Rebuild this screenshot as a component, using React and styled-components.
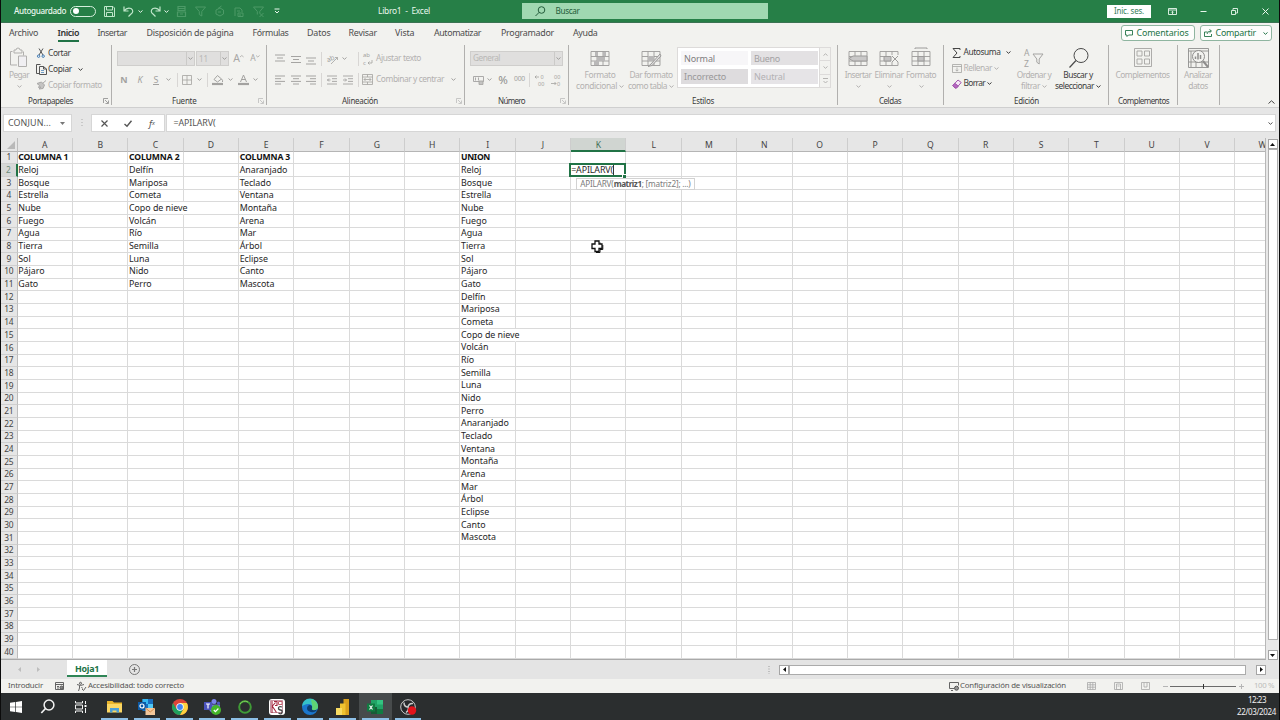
import React, { useLayoutEffect, useRef } from "react";
import styled, { createGlobalStyle, css } from "styled-components";

const Global = createGlobalStyle`
  * { box-sizing: border-box; }
  body { margin: 0; overflow: hidden; background: #000; }
`;

const ink = "#3c3c3c";
const dim = "#b3b1b0";
const green = "#217346";

/* ---------- text ---------- */
const TextSpan = styled.span`
  display: inline-block;
  flex: none;
  white-space: pre;
  font-size: ${(p) => p.$s || 8.4}px;
  font-weight: ${(p) => p.$b || 400};
  font-style: ${(p) => (p.$i ? "italic" : "normal")};
  color: ${(p) => p.$c || "inherit"};
  margin-left: ${(p) => p.$ml || 0}px;
`;

/* Label whose tracking is computed so that it fills the width w. */
function T({ w, s, b, c, i, ml, children }) {
  const ref = useRef(null);
  useLayoutEffect(() => {
    const el = ref.current;
    if (!w || !el) return;
    el.style.letterSpacing = "0px";
    const natural = el.getBoundingClientRect().width;
    el.style.letterSpacing = (w - natural) / el.textContent.length + "px";
  }, [w, s, b, children]);
  return (
    <TextSpan ref={ref} $s={s} $b={b} $c={c} $i={i} $ml={ml}>
      {children}
    </TextSpan>
  );
}

/* ---------- generic pieces ---------- */
const Svg = styled.svg`
  display: block;
  flex: none;
  fill: none;
  stroke: currentColor;
  stroke-width: 1;
  overflow: visible;
`;
const Ico = ({ w = 12, h = w, c, children }) => (
  <Svg width={w} height={h} viewBox={`0 0 ${w} ${h}`} color={c}>
    {children}
  </Svg>
);
const Slot = styled.div`
  flex: none;
  width: ${(p) => p.$w}px;
  margin-left: ${(p) => p.$ml || 0}px;
  display: flex;
  align-items: center;
  justify-content: center;
  color: ${(p) => p.$c || "inherit"};
`;
const Chevron = ({ c }) => (
  <Ico w={5} h={3} c={c}>
    <path d="M.5 .5 2.5 2.3 4.5 .5" />
  </Ico>
);
const Rule = styled.div`
  flex: none;
  width: 1px;
  height: 14px;
  margin-left: ${(p) => p.$ml || 0}px;
  background: #d8d6d4;
`;

const Window = styled.div`
  width: 1280px;
  height: 720px;
  display: flex;
  flex-direction: column;
  border-left: 1px solid #0b0b0b;
  border-right: 1px solid #0b0b0b;
  background: #e6e6e6;
  color: ${ink};
  font-family: "Noto Sans", "Open Sans", sans-serif;
  line-height: 1;
  overflow: hidden;
  position: relative;
`;

/* ---------- title bar ---------- */
const TitleBar = styled.header`
  height: 23px;
  flex: none;
  display: flex;
  align-items: center;
  padding-left: 13px;
  background: #267f47;
  border-bottom: 1px solid #3b7353;
  color: #e9f7ed;
`;
const Toggle = styled.div`
  width: 26px;
  height: 11px;
  margin-left: 4px;
  flex: none;
  border: 1px solid #d5efdc;
  border-radius: 6px;
  display: flex;
  align-items: center;
  padding-left: 2px;
  &::before { content: ""; width: 6px; height: 6px; border-radius: 50%; background: #fff; }
`;
const SearchBox = styled.div`
  width: 246px;
  height: 16px;
  flex: none;
  margin-left: 92px;
  display: flex;
  align-items: center;
  padding-left: 13px;
  background: #a0d8b1;
  color: #245c3b;
`;
const SignIn = styled.div`
  width: 44px;
  height: 13px;
  margin-left: 339px;
  flex: none;
  display: flex;
  align-items: center;
  justify-content: center;
  background: #fff;
  color: #38805a;
`;

/* ---------- tabs ---------- */
const TabBar = styled.nav`
  height: 20px;
  flex: none;
  display: flex;
  align-items: center;
  background: #f2f2ef;
`;
const Tab = styled.div`
  margin-left: ${(p) => p.$ml}px;
  height: 17px;
  display: flex;
  align-items: center;
  padding-top: 2px;
  border-bottom: 2px solid ${(p) => (p.$on ? green : "transparent")};
`;
const Outlined = styled.div`
  height: 16px;
  width: ${(p) => p.$w}px;
  margin-left: ${(p) => p.$ml}px;
  flex: none;
  display: flex;
  align-items: center;
  border: 1px solid #8fb5a0;
  border-radius: 3px;
  background: #fdfdfc;
  color: ${green};
`;
const tabs = [
  ["Archivo", 8, 29], ["Inicio", 19.5, 21.5], ["Insertar", 18.5, 29.5],
  ["Disposición de página", 19.5, 87], ["Fórmulas", 19, 36], ["Datos", 18.5, 23.5],
  ["Revisar", 18, 28.5], ["Vista", 18, 19.5], ["Automatizar", 19.5, 47],
  ["Programador", 20, 53], ["Ayuda", 19, 24.5],
];

/* ---------- ribbon ---------- */
const RibbonBar = styled.section`
  height: 64px;
  flex: none;
  display: flex;
  padding-top: 2px;
  background: #f2f2ef;
`;
const GroupBox = styled.div`
  width: ${(p) => p.$w}px;
  height: 60px;
  flex: none;
  display: flex;
  flex-direction: column;
  border-right: 1px solid #b1b0ae;
`;
const GroupBody = styled.div`
  height: 52px;
  display: flex;
`;
const GroupFoot = styled.div`
  height: 9px;
  display: flex;
  align-items: center;
  padding-left: ${(p) => p.$pl}px;
  padding-right: 2px;
  justify-content: space-between;
`;
const Launcher = ({ c = "#8a8a8a" }) => (
  <Ico w={6} c={c}>
    <path d="M.5 5V.5H5M2 2l3 3M5.500 2.500v3h-3" strokeWidth=".8" />
  </Ico>
);
function Group({ w, pl, name, nw, launch, launchColor, children }) {
  return (
    <GroupBox $w={w}>
      <GroupBody>{children}</GroupBody>
      <GroupFoot $pl={pl}>
        {name ? <T s={8} w={nw}>{name}</T> : null}
        {launch ? <Launcher c={launchColor} /> : null}
      </GroupFoot>
    </GroupBox>
  );
}
const Column = styled.div`
  flex: none;
  display: flex;
  flex-direction: column;
  padding-top: ${(p) => p.$pt || 0}px;
  margin-left: ${(p) => p.$ml || 0}px;
`;
const Row = styled.div`
  height: ${(p) => p.$h}px;
  display: flex;
  align-items: center;
  color: ${(p) => p.$c || "inherit"};
`;
const BigButton = styled.div`
  flex: none;
  width: ${(p) => p.$w}px;
  margin-left: ${(p) => p.$ml || 0}px;
  display: flex;
  flex-direction: column;
  align-items: center;
  color: ${(p) => p.$c || dim};
`;
const BigIcon = styled.div`
  height: 25px;
  display: flex;
  align-items: center;
`;
const Line = styled.div`
  height: 11px;
  display: flex;
  align-items: center;
  gap: 2px;
`;
const Combo = styled.div`
  width: ${(p) => p.$w}px;
  height: 15px;
  margin-left: ${(p) => p.$ml || 0}px;
  flex: none;
  display: flex;
  align-items: center;
  justify-content: space-between;
  padding-left: 2px;
  background: #e0dfde;
  border: 1px solid #cfcecc;
  color: #b9b8b6;
`;
const ComboArrow = styled.div`
  width: 8px;
  height: 13px;
  margin-left: auto;
  border-left: 1px solid #cbcac8;
  display: flex;
  align-items: center;
  justify-content: center;
  color: #9f9e9c;
`;
const Gallery = styled.div`
  width: 143px;
  height: 41px;
  margin-left: 1px;
  margin-top: 2px;
  flex: none;
  display: grid;
  grid-template-columns: 67px 67px;
  grid-template-rows: 14px 15px;
  gap: 4px 3px;
  padding: 3px 3px;
  background: #fff;
  border: 1px solid #dddbda;
`;
const StyleCell = styled.div`
  display: flex;
  align-items: center;
  padding-left: 3px;
  background: ${(p) => p.$bg};
  color: ${(p) => p.$c};
`;
const GalleryScroll = styled.div`
  width: 11px;
  height: 41px;
  margin-top: 2px;
  flex: none;
  display: flex;
  flex-direction: column;
  border: 1px solid #dddbda;
  border-left: 0;
`;
const ScrollStep = styled.div`
  flex: 1;
  display: flex;
  align-items: center;
  justify-content: center;
  color: #b5b4b2;
  & + & { border-top: 1px solid #dddbda; }
`;

const Lines = ({ rows, c = "#a5a4a2" }) => (
  <Ico w={10} h={10} c={c}>
    {rows.map(([x, y, w], i) => <path key={i} d={`M${x} ${y}h${w}`} />)}
  </Ico>
);
const TableIcon = ({ variant }) => (
  <Ico w={20} h={18} c="#9c9b9a">
    <path d="M1 2.500h18v14H1zM1 7.500h18M1 12h18M7 2.500v14M13 2.500v14" strokeWidth=".9" />
    {variant === "cond" && <path d="M5 3h3v4H5zM7 8h8v4H7zM4 12h5v4H4zM13 3h3v4h-3z" fill="#b9b8b8" stroke="none" />}
    {variant === "fmt" && (
      <>
        <path d="M7 7h6v5H7z" fill="#b9b8b8" stroke="none" />
        <path d="M19 5 10 15l-3 2.500 4-1L20 7z" fill="#dedddd" />
      </>
    )}
    {variant === "ins" && <path d="M5 7h14v5H5l-4-2.500z" fill="#c9c8c8" />}
    {variant === "del" && (
      <>
        <path d="M12 6h9v7h-9z" fill="#f2f2ef" stroke="none" />
        <path d="M5 7.500h7v4.500H5z" fill="#c4c3c3" />
        <path d="m13 7 6 6M19 7l-6 6" />
      </>
    )}
    {variant === "cell" && (
      <>
        <path d="M7 7.500h6V12H7z" fill="#c4c3c3" />
        <path d="M4 0v-1M4-1h12M16 0v-1" />
      </>
    )}
  </Ico>
);

function Ribbon() {
  return (
    <RibbonBar>
      <Group w={111} pl={27} name="Portapapeles" nw={45} launch>
        <BigButton $w={22} $ml={7}>
          <BigIcon>
            <Ico w={20} h={20} c="#b0afad">
              <path d="M3.500 3.500h-2v13.500H8M5 2h2a2 2 0 0 1 4 0h2v3H5zM14.500 3.500v4" fill="none" />
              <path d="M9.500 8h8v10.500h-8z" fill="#f0eff2" />
            </Ico>
          </BigIcon>
          <Line><T w={20}>Pegar</T></Line>
          <Line><Chevron /></Line>
        </BigButton>
        <Column $ml={5} >
          <Row $h={16}>
            <Slot $w={12}>
              <Ico w={8} h={10} c="#555">
                <path d="M2 .5 6 7M6 .5 2 7" />
                <circle cx="1.600" cy="8.200" r="1.200" stroke="#3a78b5" />
                <circle cx="6.200" cy="8.200" r="1.200" stroke="#3a78b5" />
              </Ico>
            </Slot>
            <T w={22.5} ml={1}>Cortar</T>
          </Row>
          <Row $h={16}>
            <Slot $w={12}>
              <Ico w={11} h={11} c="#555">
                <path d="M3 9.500H.5v-9h4M3.500 2.500h4L10.500 5v5.500h-7zM7.500 2.500V5h3" />
                <path d="M5 6.500h3M5 8.500h3" stroke="#3a78b5" strokeWidth=".7" />
              </Ico>
            </Slot>
            <T w={24} ml={1}>Copiar</T>
            <Slot $w={8} $ml={4}><Chevron /></Slot>
          </Row>
          <Row $h={16} $c={dim}>
            <Slot $w={12}>
              <Ico w={11} h={10} c="#a9a8a7">
                <path d="M1 3.500 5.500 2l3 3-1.500 3.500L3 9l2-2-2.500.5 1-2zM6.500 3.500 10 .5" fill="#c4c3c2" />
              </Ico>
            </Slot>
            <T w={54} ml={1}>Copiar formato</T>
          </Row>
        </Column>
      </Group>

      <Group w={155} pl={60} name="Fuente" nw={24.5} launch launchColor="#bbb">
        <Column $pt={5}>
          <Row $h={17} $c="#a9a8a6">
            <Combo $w={78} $ml={5}><ComboArrow><Chevron /></ComboArrow></Combo>
            <Combo $w={33} $ml={1}><T s={8}>11</T><ComboArrow><Chevron /></ComboArrow></Combo>
            <Slot $w={17} $ml={1}><T s={10.500}>A</T><Ico w={4} h={8}><path d="M0 2 1.800.5 3.600 2" strokeWidth=".8" /></Ico></Slot>
            <Slot $w={16}><T s={8.500}>A</T><Ico w={4} h={8}><path d="M0 .5 1.800 2 3.600.5" strokeWidth=".8" /></Ico></Slot>
          </Row>
          <Row $h={25} $c="#a3a2a0">
            <Slot $w={16} $ml={4}><T b={700} s={9}>N</T></Slot>
            <Slot $w={16}><T i s={9}>K</T></Slot>
            <Slot $w={16}><Ico w={8} h={11}><path d="M1 10.500h6" /><text x="1.500" y="8.500" fontSize="9" fill="currentColor" stroke="none">S</text></Ico></Slot>
            <Slot $w={8}><Chevron /></Slot>
            <Rule $ml={5} />
            <Slot $w={18}><Ico w={10}><path d="M.5.500h9v9h-9zM5 .5v9M.5 5h9" strokeWidth=".8" /></Ico></Slot>
            <Slot $w={6}><Chevron /></Slot>
            <Rule $ml={5} />
            <Slot $w={19}>
              <Ico w={12} h={11}>
                <path d="M2 5.500 5.500 1.500 9.500 5l-4 3zM9.500 5q1.500 1 1 3" />
                <path d="M0 10h11" strokeWidth="2.200" />
              </Ico>
            </Slot>
            <Slot $w={6}><Chevron /></Slot>
            <Slot $w={20}>
              <Ico w={11} h={11}>
                <path d="M2.500 8 5.500 1 8.500 8M3.500 5.500h4" />
                <path d="M0 10h11" strokeWidth="2.200" />
              </Ico>
            </Slot>
            <Slot $w={5}><Chevron /></Slot>
          </Row>
        </Column>
      </Group>

      <Group w={198} pl={75} name="Alineación" nw={36} launch launchColor="#bbb">
        <Column $pt={2}>
          <Row $h={23} $c="#a3a2a0">
            <Slot $w={16} $ml={5}><Lines rows={[[0, 1, 10], [2, 4, 6], [0, 7, 10]]} /></Slot>
            <Slot $w={15}><Lines rows={[[0, 2.500, 10], [2, 5.500, 6], [0, 8.500, 10]]} /></Slot>
            <Slot $w={16}><Lines rows={[[0, 4, 10], [2, 7, 6], [0, 10, 10]]} /></Slot>
            <Rule $ml={2} />
            <Slot $w={20}>
              <Ico w={11} h={10}><text x="0" y="7" fontSize="7" fill="currentColor" stroke="none" transform="rotate(-25 4 6)">ab</text><path d="M4 10 10.500 3.500M8 3.500h2.500V6" strokeWidth=".8" /></Ico>
            </Slot>
            <Slot $w={5}><Chevron /></Slot>
            <Rule $ml={11} />
            <Slot $w={17}>
              <Ico w={10} h={12}>
                <text x="0" y="4" fontSize="6" fill="currentColor" stroke="none">ab</text>
                <text x="0" y="12" fontSize="6" fill="currentColor" stroke="none">c</text>
                <path d="M9 7v3H5M6.500 8.500 5 10l1.500 1.500" strokeWidth=".8" />
              </Ico>
            </Slot>
            <T w={45} c={dim}>Ajustar texto</T>
          </Row>
          <Row $h={19} $c="#a3a2a0">
            <Slot $w={16} $ml={5}><Lines rows={[[0, 1, 10], [0, 3.700, 6], [0, 6.400, 10], [0, 9, 6]]} /></Slot>
            <Slot $w={15}><Lines rows={[[0, 1, 10], [2, 3.700, 6], [0, 6.400, 10], [2, 9, 6]]} /></Slot>
            <Slot $w={16}><Lines rows={[[0, 1, 10], [4, 3.700, 6], [0, 6.400, 10], [4, 9, 6]]} /></Slot>
            <Rule $ml={2} />
            <Slot $w={20}><Ico w={10}><path d="M0 1h10M5 3.700h5M5 6.400h5M0 9h10M0 5h3.500M2 3.500.5 5 2 6.500" strokeWidth=".9" /></Ico></Slot>
            <Slot $w={12}><Ico w={10}><path d="M0 1h10M5 3.700h5M5 6.400h5M0 9h10M0 5h3.500M2 3.500 3.500 5 2 6.500" strokeWidth=".9" /></Ico></Slot>
            <Rule $ml={4} />
            <Slot $w={17}><Ico w={11} h={11}><path d="M.5.500h10v10H.5zM.5 3h10M.5 8h10M5.500.500V3M5.500 8v2.500M2 5.500h7M3.500 4 2 5.500 3.500 7M7.500 4 9 5.500 7.500 7" strokeWidth=".8" /></Ico></Slot>
            <T w={68} c={dim}>Combinar y centrar</T>
            <Slot $w={6} $ml={6}><Chevron /></Slot>
          </Row>
        </Column>
      </Group>

      <Group w={104} pl={33} name="Número" nw={27} launch launchColor="#bbb">
        <Column $pt={5}>
          <Row $h={17}>
            <Combo $w={93} $ml={5}><T w={27} s={8.200}>General</T><ComboArrow><Chevron /></ComboArrow></Combo>
          </Row>
          <Row $h={25} $c="#a3a2a0">
            <Slot $w={16} $ml={5}><Ico w={11} h={10}><path d="M.5 1.500h10v5H.5zM5.500 2.500v3M2.500 2.500v3" strokeWidth=".9" /><path d="M6 6h4v3.500H6z" fill="#c4c3c2" strokeWidth=".8" /></Ico></Slot>
            <Slot $w={6}><Chevron /></Slot>
            <Slot $w={22}><T s={11.500} c="#8f8e8c">%</T></Slot>
            <Slot $w={11}><T s={6.800} w={11}>000</T></Slot>
            <Rule $ml={4} />
            <Slot $w={19}><Ico w={11} h={12}><path d="M1 3h4M2.500 1.500 1 3l1.500 1.500" strokeWidth=".8" /><text x="6.500" y="4.500" fontSize="5.500" fill="currentColor" stroke="none">0</text><text x="4" y="12" fontSize="5.500" fill="currentColor" stroke="none">00</text></Ico></Slot>
            <Slot $w={12}><Ico w={11} h={12}><text x="4" y="4.500" fontSize="5.500" fill="currentColor" stroke="none">00</text><text x="7" y="12" fontSize="5.500" fill="currentColor" stroke="none">0</text><path d="M1 9.500h5M4.500 8 6 9.500 4.500 11" strokeWidth=".8" /></Ico></Slot>
          </Row>
        </Column>
      </Group>

      <Group w={269} pl={123} name="Estilos" nw={22}>
        <BigButton $w={50} $ml={6}>
          <BigIcon><TableIcon variant="cond" /></BigIcon>
          <Line><T w={31}>Formato</T></Line>
          <Line><T w={41}>condicional</T><Chevron /></Line>
        </BigButton>
        <BigButton $w={50} $ml={1}>
          <BigIcon><TableIcon variant="fmt" /></BigIcon>
          <Line><T w={43}>Dar formato</T></Line>
          <Line><T w={39}>como tabla</T><Chevron /></Line>
        </BigButton>
        <Gallery>
          <StyleCell $bg="#f7f6f8" $c="#7e7d7e"><T s={9} w={31}>Normal</T></StyleCell>
          <StyleCell $bg="#e3e1e3" $c="#a3a2a4"><T s={9} w={26}>Bueno</T></StyleCell>
          <StyleCell $bg="#dedcde" $c="#999899"><T s={9} w={42}>Incorrecto</T></StyleCell>
          <StyleCell $bg="#e6e4e7" $c="#b3b1b4"><T s={9} w={31}>Neutral</T></StyleCell>
        </Gallery>
        <GalleryScroll>
          <ScrollStep><Ico w={5} h={3}><path d="M.5 2.500 2.500.8 4.500 2.500" /></Ico></ScrollStep>
          <ScrollStep><Chevron /></ScrollStep>
          <ScrollStep><Ico w={5} h={6}><path d="M0 .5h5M.5 3 2.500 5 4.500 3" /></Ico></ScrollStep>
        </GalleryScroll>
      </Group>

      <Group w={106} pl={41} name="Celdas" nw={22}>
        <BigButton $w={32} $ml={4}>
          <BigIcon><TableIcon variant="ins" /></BigIcon>
          <Line><T w={26.5}>Insertar</T></Line>
          <Line><Chevron /></Line>
        </BigButton>
        <BigButton $w={30}>
          <BigIcon><TableIcon variant="del" /></BigIcon>
          <Line><T w={29}>Eliminar</T></Line>
          <Line><Chevron /></Line>
        </BigButton>
        <BigButton $w={34}>
          <BigIcon><TableIcon variant="cell" /></BigIcon>
          <Line><T w={30}>Formato</T></Line>
          <Line><Chevron /></Line>
        </BigButton>
      </Group>

      <Group w={165} pl={70} name="Edición" nw={25}>
        <Column $ml={5.5}>
          <Row $h={15}>
            <Slot $w={14}><Ico w={9} h={10} c="#444"><path d="M8 2V.5H1L5 5 1 9.500h7V8" /></Ico></Slot>
            <T w={37}>Autosuma</T>
            <Slot $w={8} $ml={4}><Chevron /></Slot>
          </Row>
          <Row $h={16} $c={dim}>
            <Slot $w={14}><Ico w={10} h={9} c="#a5a4a2"><path d="M.5.500h9v8h-9zM.5 2.500h9M5 3.500V7M3.500 5.700 5 7.200l1.500-1.500" strokeWidth=".8" /></Ico></Slot>
            <T w={28.5}>Rellenar</T>
            <Slot $w={6} $ml={1}><Chevron /></Slot>
          </Row>
          <Row $h={15}>
            <Slot $w={14}><Ico w={10} h={10} c="#a255ad"><path d="M.8 6.500 6 1l3.200 2.500L4.500 9H3z" fill="#f6e7f7" /><path d="M.8 6.500 2.800 4.300 6.300 7 4.500 9H3z" fill="#b565c0" /></Ico></Slot>
            <T w={21.500}>Borrar</T>
            <Slot $w={6} $ml={1}><Chevron /></Slot>
          </Row>
        </Column>
        <BigButton $w={40} $ml={1.5}>
          <BigIcon>
            <Ico w={20} h={20} c="#a5a4a2">
              <text x="0" y="8" fontSize="8.500" fill="currentColor" stroke="none">A</text>
              <text x="0" y="19" fontSize="8.500" fill="currentColor" stroke="none">Z</text>
              <path d="M9 6h10l-3.800 5v5l-2.400-1.800V11z" />
            </Ico>
          </BigIcon>
          <Line><T w={34.500}>Ordenar y</T></Line>
          <Line><T w={19}>filtrar</T><Chevron /></Line>
        </BigButton>
        <BigButton $w={48} $c={ink}>
          <BigIcon>
            <Ico w={20} h={20} c="#4a4a4a"><circle cx="13" cy="7.500" r="7" /><path d="M8 12.500 1.500 19.500" strokeWidth="1.200" /></Ico>
          </BigIcon>
          <Line><T w={29.500}>Buscar y</T></Line>
          <Line><T w={39}>seleccionar</T><Chevron /></Line>
        </BigButton>
      </Group>

      <Group w={68.5} pl={9} name="Complementos" nw={51}>
        <BigButton $w={58} $ml={4.5}>
          <BigIcon><Ico w={18} h={19} c="#a5a4a2"><path d="M.5.500h17v18H.5zM3 3h5v5H3zM10.500 3h5v5h-5zM3 11h5v5H3zM10.500 11h5v5h-5z" strokeWidth=".9" /></Ico></BigIcon>
          <Line><T w={54}>Complementos</T></Line>
        </BigButton>
      </Group>
      <Group w={42.5} pl={0}>
        <BigButton $w={34} $ml={3.5}>
          <BigIcon>
            <Ico w={21} h={20} c="#8f8e8d">
              <path d="M.5.500h20v19H.5zM.5 3h20M.5 14h20M3 3v16M8 14v5M14 14v5" strokeWidth=".9" />
              <circle cx="10.500" cy="8.500" r="6" fill="#f2f2ef" />
              <path d="M7.500 11V8.500M10 11.500V5M12.500 11V7" strokeWidth="1.500" />
              <path d="m15 13 5 6" strokeWidth="2" />
            </Ico>
          </BigIcon>
          <Line><T w={28}>Analizar</T></Line>
          <Line><T w={19.500}>datos</T></Line>
        </BigButton>
      </Group>
      <Collapse><Ico w={7} h={4} c="#444"><path d="M.5 3.500 3.500.800 6.500 3.500" /></Ico></Collapse>
    </RibbonBar>
  );
}
const Collapse = styled.div`
  flex: 1;
  display: flex;
  align-items: flex-end;
  justify-content: flex-end;
  padding: 0 4px 3px 0;
`;

/* ---------- formula bar ---------- */
const FormulaStrip = styled.div`
  height: 31px;
  flex: none;
  display: flex;
  align-items: flex-start;
  padding: 6px 0 0 2px;
  border-top: 1px solid #cfcfcf;
  background: #e6e6e6;
`;
const Field = styled.div`
  width: ${(p) => p.$w}px;
  height: 18px;
  margin-left: ${(p) => p.$ml || 0}px;
  flex: none;
  display: flex;
  align-items: center;
  background: #fff;
  border: 1px solid #d6d6d6;
  color: #555;
`;

/* ---------- sheet ---------- */
const COL = 55.35;
const ROW = 12.68;
const SheetArea = styled.div`
  height: 522px;
  flex: none;
  display: flex;
`;
const Sheet = styled.div`
  width: 1265px;
  overflow: hidden;
  border-right: 1px solid #b8b8b8;
  border-bottom: 1px solid #a9a9a9;
  background: #fff;
`;
const HeadRow = styled.div`
  display: flex;
  width: 1300px;
  height: 13.8px;
`;
const Corner = styled.div`
  width: 16.7px;
  flex: none;
  display: flex;
  align-items: flex-end;
  justify-content: flex-end;
  padding: 0 2px 2px 0;
  background: #e6e6e6;
  border-right: 1px solid #bdbdbd;
  border-bottom: 1px solid #b5b5b5;
`;
const ColHead = styled.div`
  width: ${COL}px;
  flex: none;
  display: flex;
  align-items: center;
  justify-content: center;
  padding-top: 1px;
  font-size: 8.600px;
  color: #444;
  background: #e6e6e6;
  border-right: 1px solid #cdcdcd;
  border-bottom: 1px solid #b5b5b5;
  ${(p) => p.$on && css`
    padding-top: 2px;
    background: #d0d5d1;
    color: #3d6e54;
    border-bottom: 2px solid ${green};
  `}
`;
const DataRow = styled.div`
  display: flex;
  width: 1300px;
  height: ${ROW}px;
`;
const RowHead = styled.div`
  width: 16.7px;
  flex: none;
  display: flex;
  align-items: center;
  justify-content: center;
  font-size: 8.400px;
  letter-spacing: -0.2px;
  color: #444;
  background: #e6e6e6;
  border-right: 1px solid #bdbdbd;
  border-bottom: 1px solid #cfcfcf;
  ${(p) => p.$on && css`
    background: #d6d8d7;
    color: #6d8c7b;
    border-right: 2px solid ${green};
  `}
`;
const Cell = styled.div`
  width: ${COL}px;
  flex: none;
  display: flex;
  align-items: center;
  padding: 0 0 0 0.6px;
  white-space: nowrap;
  font-size: 8.900px;
  letter-spacing: -0.04px;
  color: #262626;
  border-right: 1px solid ${(p) => (p.$spill ? "transparent" : "#dadada")};
  border-bottom: 1px solid #dadada;
  position: relative;
`;
const ActiveCell = styled.div`
  position: absolute;
  left: -2px;
  top: -1px;
  width: 57px;
  height: 14px;
  display: flex;
  align-items: center;
  background: #fff;
  border: 2px solid ${green};
  z-index: 2;
`;
const Caret = styled.div`
  width: 1px;
  height: 10px;
  background: #333;
`;
const FillHandle = styled.div`
  position: absolute;
  right: -2px;
  bottom: -3px;
  width: 4px;
  height: 4px;
  background: ${green};
  border-left: 1px solid #fff;
  border-top: 1px solid #fff;
`;
const Hint = styled.div`
  position: absolute;
  left: 5px;
  top: 14px;
  width: 119px;
  height: 12px;
  display: flex;
  align-items: center;
  padding-left: 3px;
  background: #fff;
  border: 1px solid #d2d2d2;
  color: #7b7b7b;
  z-index: 2;
`;
const Pointer = styled.div`
  position: absolute;
  left: 590px;
  top: 240px;
`;
const VScroll = styled.div`
  width: 13px;
  display: flex;
  flex-direction: column;
  align-items: center;
  padding-top: 1px;
  background: #e8e8e8;
`;
const ArrowBox = styled.div`
  width: 10px;
  height: 10px;
  flex: none;
  margin-left: ${(p) => p.$ml || 0}px;
  margin-top: ${(p) => p.$mt || 0};
  display: flex;
  align-items: center;
  justify-content: center;
  background: #fff;
  border: 1px solid #a5a5a5;
  color: #111;
`;
const VThumb = styled.div`
  width: 10px;
  height: 491px;
  background: #fff;
  border: 1px solid #b0b0b0;
`;

const names = [
  ["Reloj", "Bosque", "Estrella", "Nube", "Fuego", "Agua", "Tierra", "Sol", "Pájaro", "Gato"],
  ["Delfín", "Mariposa", "Cometa", "Copo de nieve", "Volcán", "Río", "Semilla", "Luna", "Nido", "Perro"],
  ["Anaranjado", "Teclado", "Ventana", "Montaña", "Arena", "Mar", "Árbol", "Eclipse", "Canto", "Mascota"],
];
const columns = { A: names[0], C: names[1], E: names[2], I: names.flat() };
const titles = { A: ["COLUMNA 1", 50], C: ["COLUMNA 2", 50.500], E: ["COLUMNA 3", 50.500], I: ["UNION", 29] };
const letters = "ABCDEFGHIJKLMNOPQRSTUVW".split("");

function Grid() {
  return (
    <Sheet>
      <HeadRow>
        <Corner><Ico w={8} h={8} c="#b9b9b9"><path d="M8 0v8H0z" fill="currentColor" stroke="none" /></Ico></Corner>
        {letters.map((l) => <ColHead key={l} $on={l === "K"}>{l}</ColHead>)}
      </HeadRow>
      {Array.from({ length: 40 }, (_, r) => (
        <DataRow key={r}>
          <RowHead $on={r === 1}>{r + 1}</RowHead>
          {letters.map((l) => {
            const value = r > 0 && columns[l] ? columns[l][r - 1] : null;
            return (
              <Cell key={l} $spill={value === "Copo de nieve"}>
                {r === 0 && titles[l] ? <T s={8.600} b={700} w={titles[l][1]} c="#111">{titles[l][0]}</T> : value}
                {r === 1 && l === "K" && (
                  <>
                    <ActiveCell><T s={8.900} w={42}>=APILARV(</T><Caret /><FillHandle /></ActiveCell>
                    <Hint>
                      <T s={8.200} w={33.500}>APILARV(</T>
                      <T s={8.200} b={700} w={28} c="#555">matriz1</T>
                      <T s={8.200} w={49}>; [matriz2]; ...)</T>
                    </Hint>
                  </>
                )}
              </Cell>
            );
          })}
        </DataRow>
      ))}
    </Sheet>
  );
}

/* ---------- sheet tabs, status ---------- */
const SheetTabs = styled.div`
  height: 19px;
  flex: none;
  display: flex;
  align-items: center;
  background: #e4e4e4;
`;
const SheetTab = styled.div`
  width: 40px;
  height: 17px;
  margin-left: 25px;
  align-self: flex-start;
  display: flex;
  align-items: center;
  justify-content: center;
  padding-top: 3px;
  background: #fff;
  border-bottom: 2px solid #2f8556;
  color: ${green};
`;
const HTrack = styled.div`
  width: 457px;
  height: 10px;
  flex: none;
  background: #fff;
  border: 1px solid #ababab;
`;
const Status = styled.div`
  height: 14px;
  flex: none;
  display: flex;
  align-items: center;
  background: #f2f2ef;
  color: #555;
`;
const ZoomTrack = styled.div`
  width: 66px;
  height: 1px;
  flex: none;
  margin: 0 2px;
  display: flex;
  align-items: center;
  justify-content: center;
  background: #6b6b6b;
  &::before { content: ""; width: 1px; height: 5px; background: #333; }
`;

/* ---------- taskbar ---------- */
const Taskbar = styled.footer`
  height: 27px;
  flex: none;
  display: flex;
  margin: 0 -1px;
  background: #2b2e2f;
  color: #f2f2f2;
`;
const TaskItem = styled.div`
  width: 32.65px;
  flex: none;
  padding: 0 3px;
  background: ${(p) => (p.$on ? "#474b4c" : "transparent")};
`;
const TaskFace = styled.div`
  height: 27px;
  display: flex;
  align-items: center;
  justify-content: center;
  padding-top: 2px;
  border-bottom: 2px solid ${(p) => (p.$run ? "#8dbfe6" : "transparent")};
`;
const Clock = styled.div`
  margin-left: auto;
  padding: 1px 4px 0 0;
  display: flex;
  flex-direction: column;
  align-items: flex-end;
`;
const ClockLine = styled.div`
  height: 12px;
  display: flex;
  align-items: center;
  padding-right: ${(p) => p.$pr || 0}px;
`;

const taskIcons = [
  [false, <Ico w={12} key="w"><path d="M0 1.700 5.300 1v4.700H0zM6 .9 12 0v5.700H6zM0 6.300h5.300V11L0 10.300zM6 6.300h6V12l-6-.9z" fill="#fff" stroke="none" /></Ico>],
  [false, <Ico w={15} h={15} key="s"><circle cx="8" cy="6" r="4.900" strokeWidth="1.500" /><path d="M4.500 9.500 .3 14" strokeWidth="1.700" /></Ico>],
  [false, <Ico w={14} h={12} key="t"><path d="M.5 0v2h7V0M.5 12v-2h7v2M.5 4h7v4h-7zM10.500 0v3M10.500 7v5" /><path d="M9.500 4h2v2h-2z" fill="#fff" stroke="none" /></Ico>],
  [true, <Ico w={15} h={13} key="e"><path d="M0 1h5.500L7 2.500h8V12H0z" fill="#e9b52c" stroke="none" /><path d="M0 4h15v8.500H0z" fill="#fbd764" stroke="none" /><path d="M3 12.500V8h9v4.500h-2.500V10.500h-4v2z" fill="#4a9fd8" stroke="none" /></Ico>],
  [true, <Ico w={17} h={16} key="o"><path d="M4.500 0h10.500v12H4.500z" fill="#1a6fc0" stroke="none" /><path d="M4.500 0H10v5H4.500z" fill="#35b8f1" stroke="none" /><path d="M10 5h5v5h-5z" fill="#50c8f5" stroke="none" /><path d="M0 3h8v8H0z" fill="#0c5aa6" stroke="none" /><circle cx="4" cy="7" r="2" stroke="#fff" strokeWidth="1.200" /><path d="M7.500 9H17v7H7.500z" fill="#f4c79a" stroke="none" /><path d="m7.500 9 4.700 4L17 9" stroke="#d68b4a" /></Ico>],
  [true, <Ico w={16} key="c"><circle cx="8" cy="8" r="8" fill="#dd4437" stroke="none" /><path d="M1.070 4A8 8 0 0 0 8 16l3.500-6L8 8 4.500 10z" fill="#1fa15d" stroke="none" /><path d="M14.900 4H8v4l3.500 2L8 16A8 8 0 0 0 14.900 4z" fill="#fdd23e" stroke="none" /><circle cx="8" cy="8" r="3.700" fill="#fff" stroke="none" /><circle cx="8" cy="8" r="2.900" fill="#4285f4" stroke="none" /></Ico>],
  [true, <Ico w={17} h={16} key="tm"><circle cx="10" cy="2.500" r="2.500" fill="#7b83eb" stroke="none" /><circle cx="14.500" cy="4" r="1.600" fill="#5059c9" stroke="none" /><path d="M5 5.500h11V10q-1 4-5.500 4T5 10z" fill="#6f74d8" stroke="none" /><path d="M0 3h8v8H0z" fill="#4b53bc" stroke="none" /><path d="M2 5h4M4 5v4.500" stroke="#fff" strokeWidth="1.200" /><circle cx="12" cy="11" r="5" fill="#45b629" stroke="none" /><path d="m9.800 11 1.600 1.700 3-3.200" stroke="#fff" strokeWidth="1.200" /></Ico>],
  [true, <Ico w={14} key="g"><circle cx="7" cy="7" r="5.800" stroke="#3f9a36" strokeWidth="2" /><path d="M2 4a5.800 5.800 0 0 1 8-2" stroke="#7fd05a" /></Ico>],
  [true, <Ico w={16} key="ks"><rect x="0" y="0" width="16" height="16" rx="3" fill="#fff" stroke="none" /><path d="M1.500 1.500h12v12h-12z" stroke="#b9788a" strokeWidth=".8" /><path d="M3 2v12M3 7.500l3.500-4M3.500 7.500l4 6M5 2.500h3v4H6" stroke="#a3263d" strokeWidth="1.100" /><path d="M9.500 2.500H13v3H9.500z" stroke="#c45f6f" /><path d="M13 8q-3.500-1-3.500 1t2 2 1.500 2.500-3.500.5" stroke="#444" strokeWidth="1.300" /></Ico>],
  [true, <Ico w={16} key="ed"><circle cx="8" cy="8" r="8" fill="#1b76cc" stroke="none" /><path d="M0 7.500A8 8 0 0 1 16 7.500c0 3-2.500 3.700-4.500 3.700-2 0-2-1-1.500-1.700C11 7.500 9.500 5 6.500 5 3 5 .5 6.500 0 7.500z" fill="#35c1c9" stroke="none" /><path d="M9 .2A8 8 0 0 1 16 7.500c0 3-2.500 3.700-4.500 3.700-2 0-2-1-1.500-1.700 1-3-1-7-1-9.300z" fill="#5fd475" stroke="none" /><path d="M5 9.500C5 7.500 6.500 6 8 6c1.500 0 2.500 1.500 2 3-.5 1 0 2 1.500 2.200 1.500.1 2.500-.2 3.500-.7-1 2-3 3-5 2.700C7 13 5 11.500 5 9.500z" fill="#0d3d70" stroke="none" /></Ico>],
  [true, <Ico w={13} h={16} key="pb"><path d="M7.500 0H13v16H7.500z" fill="#d9a01c" stroke="none" /><path d="M4 4.500h5.500V16H4z" fill="#f0c330" stroke="none" /><path d="M0 9h6v7H0z" fill="#f9dc63" stroke="none" /></Ico>],
  [true, <Ico w={16} h={14} key="x"><path d="M4 0h12v14H4z" fill="#21a366" stroke="none" /><path d="M10 0h6v4.500h-6z" fill="#33c481" stroke="none" /><path d="M4 7h6v7H4z" fill="#185c37" stroke="none" /><path d="M10 9h6v5h-6z" fill="#107c41" stroke="none" /><path d="M0 3.500h8v8H0z" fill="#107c41" stroke="none" /><path d="m2.500 5.500 3 4M5.500 5.500l-3 4" stroke="#fff" strokeWidth="1.100" /></Ico>],
  [true, <Ico w={17} h={16} key="ob"><circle cx="8" cy="8" r="7.300" fill="#26282b" stroke="#c9c9c9" /><path d="M8 8q-4 0-4-4.500M8 8q1-4 5-3.500M8 8q1.500 3-2 5.500" stroke="#c9c9c9" strokeWidth="1.500" /><circle cx="12" cy="11.500" r="4.200" fill="#e3131b" stroke="none" /></Ico>],
];

export default function App() {
  return (
    <Window>
      <Global />
      <TitleBar>
        <T w={52} s={8.200} b={500}>Autoguardado</T>
        <Toggle />
        <Slot $w={26} $c="#bfe6ca"><Ico w={11}><path d="M.5.500h8.500l1.500 1.500v8.500H.5zM2.500.500v3.500h6V.5M2.500 10.500v-4h6v4" /></Ico></Slot>
        <Slot $w={13} $c="#bfe6ca"><Ico w={11} h={11}><path d="M1 .5V5h4.500M1 5q3-4 7-2.500 3.500 2.500 0 5.500L5.500 10.500" strokeWidth="1.200" /></Ico></Slot>
        <Slot $w={11}><Chevron /></Slot>
        <Slot $w={18} $c="#bfe6ca"><Ico w={11} h={11}><path d="M10 .5V5H5.500M10 5Q7 1 3 2.500-.5 5 3 8l2.500 2.500" strokeWidth="1.200" /></Ico></Slot>
        <Slot $w={5}><Chevron /></Slot>
        <Slot $w={24} $c="#4c9a67"><Ico w={9} h={11}><path d="M1 .5h7v4H1zM.5 6h8v4.500h-8zM1 2.500h7M3 8h3" strokeWidth="1.200" /></Ico></Slot>
        <Slot $w={14} $c="#4c9a67"><Ico w={11} h={11}><path d="M.5 1h10L6.800 5.500V10L4.300 8.500v-3z" /></Ico></Slot>
        <Slot $w={24} $c="#4c9a67"><Ico w={9} h={11}><path d="M1 4 5 2l3.500 2v4L5 10 1 8zM3 2.500 6.500 0M3 6h3" /></Ico></Slot>
        <Slot $w={16} $c="#4c9a67"><Ico w={10} h={11}><path d="M1 10V2h5l2 2v2M3 5h3M4 7h5v3.500H4zM6 8v2" /></Ico></Slot>
        <Slot $w={22} $c="#4c9a67"><Ico w={11} h={11}><path d="M.5 1h10L6.800 5.500V7M.5 1l3.800 4.500v3M6.500 7l4 4M10.500 7l-4 4" /></Ico></Slot>
        <Slot $w={16}><Ico w={6} h={6}><path d="M.5 1h5M1 3l2 2 2-2" /></Ico></Slot>
        <T w={52} s={8.400} ml={93}>Libro1  -  Excel</T>
        <SearchBox>
          <Ico w={11} h={10}><circle cx="6.500" cy="4" r="3.300" /><path d="M4.200 6.300.5 10" /></Ico>
          <T w={24} s={8.200} ml={9.5}>Buscar</T>
        </SearchBox>
        <SignIn><T w={30} s={8}>Inic. ses.</T></SignIn>
        <Slot $w={42}><Ico w={9} h={7}><path d="M.5.500h8v6h-8zM.5 2h8M4.500 6V3.500M3.300 4.500l1.200-1.200 1.200 1.200" strokeWidth=".9" /></Ico></Slot>
        <Slot $w={20}><Ico w={7} h={3}><path d="M.5 1.500h6" /></Ico></Slot>
        <Slot $w={42}><Ico w={7}><path d="M.5 2.500h4v4h-4zM2 2V.5h4.500V5H5" strokeWidth=".9" /></Ico></Slot>
        <Slot $w={20}><Ico w={7}><path d="m.5.500 6 6M6.500.500l-6 6" /></Ico></Slot>
      </TitleBar>

      <TabBar>
        {tabs.map(([name, ml, w]) => (
          <Tab key={name} $ml={ml} $on={name === "Inicio"}>
            <T w={w} s={8.900} b={name === "Inicio" ? 600 : 400} c={name === "Inicio" ? "#333" : "#4d4d4d"}>{name}</T>
          </Tab>
        ))}
        <Outlined $w={74} $ml={523}>
          <Slot $w={15}><Ico w={8} h={7}><path d="M.5.500h7v4.500H3.500L2 6.500V5H.5z" strokeWidth=".9" /></Ico></Slot>
          <T w={52} s={8.900}>Comentarios</T>
        </Outlined>
        <Outlined $w={72} $ml={5}>
          <Slot $w={15}><Ico w={9} h={8}><path d="M3.500 3H.5v4.500h7V5M3 5q.5-3 4-3M5.500.500 7.500 2 5.500 3.800" strokeWidth=".9" /></Ico></Slot>
          <T w={40.500} s={8.900}>Compartir</T>
          <Slot $w={6} $ml={6}><Chevron /></Slot>
        </Outlined>
      </TabBar>

      <Ribbon />

      <FormulaStrip>
        <Field $w={69}>
          <T w={43} s={8.900} ml={4}>CONJUN...</T>
          <Slot $w={10} $ml={6}><Ico w={5} h={3} c="#777"><path d="M0 0h5L2.500 3z" fill="currentColor" stroke="none" /></Ico></Slot>
        </Field>
        <Slot $w={19}><Ico w={2} h={18} c="#aaa"><path d="M1 5v9" strokeDasharray="1 2" /></Ico></Slot>
        <Field $w={74}>
          <Slot $w={24}><Ico w={7}><path d="m.5.500 6 6M6.500.500l-6 6" strokeWidth="1.200" /></Ico></Slot>
          <Slot $w={24}><Ico w={8} h={7}><path d="M.5 4 3 6.300 7.500.8" strokeWidth="1.400" /></Ico></Slot>
          <Slot $w={24}><T i s={9}>f</T><T i s={6}>x</T></Slot>
        </Field>
        <Field $w={1110} $ml={1}>
          <T w={42} s={8.900} ml={6.5}>=APILARV(</T>
          <Slot $w={8} $ml={1051}><Chevron /></Slot>
        </Field>
      </FormulaStrip>

      <SheetArea>
        <Grid />
        <VScroll>
          <ArrowBox><Ico w={5} h={3}><path d="M0 3h5L2.500 0z" fill="currentColor" stroke="none" /></Ico></ArrowBox>
          <VThumb />
          <ArrowBox $mt="auto"><Ico w={5} h={3}><path d="M0 0h5L2.500 3z" fill="currentColor" stroke="none" /></Ico></ArrowBox>
        </VScroll>
      </SheetArea>

      <SheetTabs>
        <Slot $w={12} $ml={12} $c="#bdbdbd"><Ico w={3} h={5}><path d="M3 0v5L0 2.500z" fill="currentColor" stroke="none" /></Ico></Slot>
        <Slot $w={8} $ml={9} $c="#bdbdbd"><Ico w={3} h={5}><path d="M0 0v5l3-2.500z" fill="currentColor" stroke="none" /></Ico></Slot>
        <SheetTab><T w={24} s={8.900} b={700}>Hoja1</T></SheetTab>
        <Slot $w={12} $ml={21} $c="#777"><Ico w={11}><circle cx="5.500" cy="5.500" r="5" /><path d="M5.500 3v5M3 5.500h5" strokeWidth="1.200" /></Ico></Slot>
        <Slot $w={4} $ml={627}><Ico w={2} h={8} c="#999"><path d="M1 0v8" strokeDasharray="1 1.500" /></Ico></Slot>
        <ArrowBox $ml={8}><Ico w={3} h={5}><path d="M3 0v5L0 2.500z" fill="currentColor" stroke="none" /></Ico></ArrowBox>
        <HTrack />
        <ArrowBox $ml={10}><Ico w={3} h={5}><path d="M0 0v5l3-2.500z" fill="currentColor" stroke="none" /></Ico></ArrowBox>
      </SheetTabs>

      <Status>
        <T w={35} s={7.800} ml={7}>Introducir</T>
        <Slot $w={11} $ml={11}><Ico w={9} h={8}><path d="M.5.500h8v7h-8zM.5 2.500h8M2 4.500h2M2 6h2" strokeWidth=".9" /><circle cx="6.500" cy="5.500" r="1.500" fill="#888" /></Ico></Slot>
        <Slot $w={11} $ml={11}><Ico w={9} h={9}><circle cx="3.500" cy="1.300" r="1" /><path d="M0 2.500q3.500 2 7 0M2.500 3.500V6L1.500 9M4.500 5l1 1.500M5 7l1.500 1.500L9 5" strokeWidth=".9" /></Ico></Slot>
        <T w={96} s={7.800} ml={1}>Accesibilidad: todo correcto</T>
        <Slot $w={12} $ml={764}><Ico w={10} h={9}><path d="M5 6.500H.5v-6h9v3M2 8.500h2" strokeWidth=".9" /><circle cx="7.500" cy="6.200" r="2" fill="#999" /></Ico></Slot>
        <T w={106} s={7.800}>Configuración de visualización</T>
        <Slot $w={10} $ml={20} $c="#a8a8a8"><Ico w={9} h={8}><path d="M.5.500h8v7h-8zM.5 2.800h8M.5 5.200h8M3.200.500v7M5.800.500v7" strokeWidth=".8" /></Ico></Slot>
        <Slot $w={10} $ml={17} $c="#a8a8a8"><Ico w={9} h={8}><path d="M.5.500h8v7h-8zM2.500 2h4v5.500h-4zM3.500 4h2" strokeWidth=".8" /></Ico></Slot>
        <Slot $w={10} $ml={17} $c="#a8a8a8"><Ico w={9} h={8}><path d="M.5.500h8v7h-8zM3 .5v4.500h3V.5" strokeWidth=".8" /></Ico></Slot>
        <Slot $w={6} $ml={12} $c="#b5b5b5"><Ico w={5} h={1}><path d="M0 .5h5" /></Ico></Slot>
        <ZoomTrack />
        <Slot $w={6} $c="#b5b5b5"><Ico w={5} h={5}><path d="M0 2.500h5M2.500 0v5" /></Ico></Slot>
        <T w={20} s={7.800} c="#bcbcba" ml={10}>100 %</T>
      </Status>

      <Taskbar>
        {taskIcons.map(([run, icon], i) => (
          <TaskItem key={i} $on={i === 11}><TaskFace $run={run}>{icon}</TaskFace></TaskItem>
        ))}
        <Clock>
          <ClockLine $pr={10}><T w={18} s={8}>12:23</T></ClockLine>
          <ClockLine><T w={39} s={8}>22/03/2024</T></ClockLine>
        </Clock>
      </Taskbar>

      <Pointer>
        <Ico w={12} h={13} c="#111">
          <path d="M4 1h4v3h3v4.500H8v3H4v-3H1V4h3z" fill="#fff" strokeWidth="1.300" />
          <path d="M9 2.500v1.500M11.800 5v4.500H9v3H5" strokeWidth="1" />
        </Ico>
      </Pointer>
    </Window>
  );
}
